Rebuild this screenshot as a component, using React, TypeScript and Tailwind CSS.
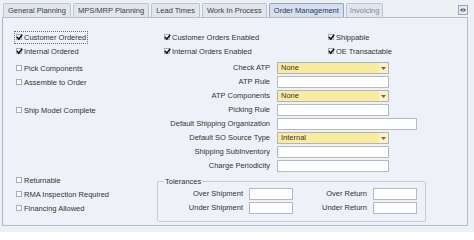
import type { ReactNode } from 'react';

const TABS = [
  { label: 'General Planning' },
  { label: 'MPS/MRP Planning' },
  { label: 'Lead Times' },
  { label: 'Work In Process' },
  { label: 'Order Management', active: true },
  { label: 'Invoicing', muted: true },
];

const CheckMark = () => (
  <svg
    viewBox="0 0 8 8"
    className="h-[7px] w-[7px] shrink-0 overflow-visible"
    fill="none"
    stroke="#111"
    strokeWidth="1.7"
    strokeLinecap="square"
  >
    <path d="M1.6 3.9 3.3 5.7 6.6 1.5" />
  </svg>
);

const CheckBox = ({
  label,
  checked = false,
  focused = false,
}: {
  label: string;
  checked?: boolean;
  focused?: boolean;
}) => (
  <div className="flex h-[14px] items-center">
    <div
      className={
        focused
          ? 'flex items-center gap-[2px] outline-1 outline-dotted outline-[#6b6b6b] outline-offset-[1px]'
          : 'flex items-center gap-[2px]'
      }
    >
      <span className="flex h-[6px] w-[6px] items-center justify-center border border-[#a7aeb7] bg-white">
        {checked ? <CheckMark /> : null}
      </span>
      <span className="leading-[9px]">{label}</span>
    </div>
  </div>
);

const TextInput = ({ width = 'w-[112px]' }: { width?: string }) => (
  <div className={`h-[12px] ${width} border border-[#b4bbc5] bg-white`} />
);

const Select = ({ value }: { value: string }) => (
  <div className="flex h-[12px] w-[112px] items-center border border-[#aeb5bf] bg-[#fbeb9e]">
    <span className="flex-1 pl-[3px] leading-none text-[#333]">{value}</span>
    <span className="flex h-full w-[9px] items-center justify-center bg-[#fcf2c4]">
      <svg viewBox="0 0 5 3" className="h-[3px] w-[5px]">
        <path d="M0 0h5L2.5 3z" fill="#666" />
      </svg>
    </span>
  </div>
);

const FormRow = ({ left, label, children }: { left?: ReactNode; label: string; children: ReactNode }) => (
  <div className="flex h-[14px] items-center">
    <div className="w-[141px]">{left}</div>
    <div className="w-[120px] pr-[7px] text-right leading-none">{label}</div>
    {children}
  </div>
);

export default function App() {
  return (
    <div className="flex h-[232px] w-[474px] flex-col overflow-hidden bg-[#edf1f6] pl-[2px] pr-[6px] font-['Liberation_Sans',Arial,sans-serif] text-[7.5px] text-[#333]">
      <div className="flex h-[17px] shrink-0 items-end gap-[2px] pl-[1px]">
        {TABS.map((tab) => (
          <div
            key={tab.label}
            className={
              tab.active
                ? 'h-[14px] rounded-t-[2px] border border-b-0 border-[#93a5be] bg-[#d6e0ed] px-[4px] leading-[13px] text-[#1d3766]'
                : tab.muted
                  ? 'h-[14px] rounded-t-[2px] border border-b-0 border-[#bcc4cf] bg-[#e1e6ed] px-[3px] leading-[13px] text-[#7d8a9b]'
                  : 'h-[14px] rounded-t-[2px] border border-b-0 border-[#bcc4cf] bg-[#e1e6ed] px-[4px] leading-[13px] text-[#3d3d3d]'
            }
          >
            {tab.label}
          </div>
        ))}
        <div className="mb-[2px] ml-auto flex h-[10px] w-[10px] items-center justify-center gap-[1px] border border-[#9aa8ba] bg-[#e4e9f0]">
          <svg viewBox="0 0 6 4" className="h-[4px] w-[6px]">
            <path d="M0 2 2.5 0v4z M6 2 3.5 0v4z" fill="#4a5566" />
          </svg>
        </div>
      </div>

      <div className="h-[209px] shrink-0 border border-[#b5bfcc] border-l-[#a9b6c8] bg-[#eef2f8] pl-[13px] pt-[12px]">
        <div className="grid grid-cols-[148px_164px_1fr]">
          <CheckBox label="Customer Ordered" checked focused />
          <CheckBox label="Customer Orders Enabled" checked />
          <CheckBox label="Shippable" checked />
          <CheckBox label="Internal Ordered" checked />
          <CheckBox label="Internal Orders Enabled" checked />
          <CheckBox label="OE Transactable" checked />
        </div>

        <div className="mt-[3px]">
          <FormRow left={<CheckBox label="Pick Components" />} label="Check ATP">
            <Select value="None" />
          </FormRow>
          <FormRow left={<CheckBox label="Assemble to Order" />} label="ATP Rule">
            <TextInput />
          </FormRow>
          <FormRow label="ATP Components">
            <Select value="None" />
          </FormRow>
          <FormRow left={<CheckBox label="Ship Model Complete" />} label="Picking Rule">
            <TextInput />
          </FormRow>
          <FormRow label="Default Shipping Organization">
            <TextInput width="w-[140px]" />
          </FormRow>
          <FormRow label="Default SO Source Type">
            <Select value="Internal" />
          </FormRow>
          <FormRow label="Shipping SubInventory">
            <TextInput />
          </FormRow>
          <FormRow label="Charge Periodicity">
            <TextInput />
          </FormRow>
        </div>

        <div className="flex">
          <div className="w-[141px]">
            <CheckBox label="Returnable" />
            <CheckBox label="RMA Inspection Required" />
            <CheckBox label="Financing Allowed" />
          </div>
          <div className="relative mt-[8px] h-fit w-[269px] rounded-[2px] border border-[#c6cdd7] pb-[6px] pt-[5px]">
            <span className="absolute left-[6px] top-[-5px] bg-[#eef2f8] px-[1px] leading-[9px]">Tolerances</span>
            {[
              ['Over Shipment', 'Over Return'],
              ['Under Shipment', 'Under Return'],
            ].map(([first, second]) => (
              <div key={first} className="flex h-[14px] items-center">
                <div className="w-[91px] pr-[6px] text-right leading-none">{first}</div>
                <TextInput width="w-[44px]" />
                <div className="w-[80px] pr-[6px] text-right leading-none">{second}</div>
                <TextInput width="w-[44px]" />
              </div>
            ))}
          </div>
        </div>
      </div>
    </div>
  );
}
